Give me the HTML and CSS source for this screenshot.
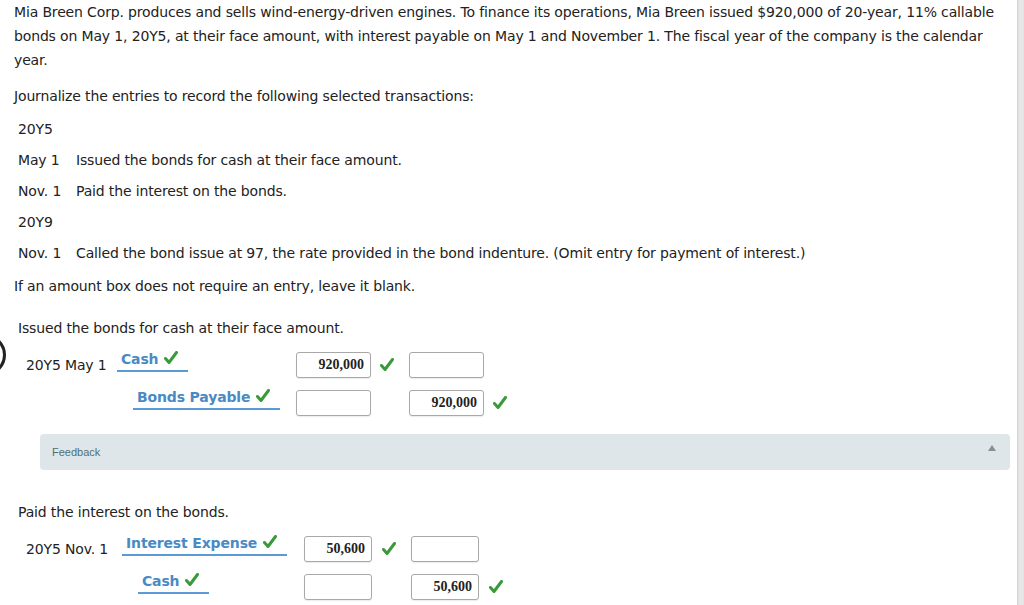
FILE: index.html
```html
<!DOCTYPE html>
<html>
<head>
<meta charset="utf-8">
<link rel="stylesheet" href="styles.css">
</head>
<body>
<div class="page">
  <p class="intro">Mia Breen Corp. produces and sells wind-energy-driven engines. To finance its operations, Mia Breen issued $920,000 of 20-year, 11% callable bonds on May 1, 20Y5, at their face amount, with interest payable on May 1 and November 1. The fiscal year of the company is the calendar year.</p>
  <p class="instr">Journalize the entries to record the following selected transactions:</p>
  <div class="trans">
    <div class="yr">20Y5</div>
    <div class="tx"><span class="td">May 1</span><span>Issued the bonds for cash at their face amount.</span></div>
    <div class="tx"><span class="td">Nov. 1</span><span>Paid the interest on the bonds.</span></div>
    <div class="yr">20Y9</div>
    <div class="tx"><span class="td">Nov. 1</span><span>Called the bond issue at 97, the rate provided in the bond indenture. (Omit entry for payment of interest.)</span></div>
  </div>
  <p class="note">If an amount box does not require an entry, leave it blank.</p>

  <div class="section s1">
    <div class="circle"></div>
    <p class="stitle">Issued the bonds for cash at their face amount.</p>
    <div class="journal j1">
      <div class="row">
        <div class="date">20Y5 May 1</div>
        <div class="acct"><span class="lbl">Cash<svg class="chk" viewBox="0 0 14 14"><path d="M1.5 7.5 L5 11.5 L12.5 1.5"/></svg></span></div>
        <div class="amt"><input class="box" type="text" value="920,000" readonly><svg class="chk" viewBox="0 0 14 14"><path d="M1.5 7.5 L5 11.5 L12.5 1.5"/></svg></div>
        <div class="amt"><input class="box" type="text" value="" readonly></div>
      </div>
      <div class="row">
        <div class="date"></div>
        <div class="acct ind"><span class="lbl">Bonds Payable<svg class="chk" viewBox="0 0 14 14"><path d="M1.5 7.5 L5 11.5 L12.5 1.5"/></svg></span></div>
        <div class="amt"><input class="box" type="text" value="" readonly></div>
        <div class="amt"><input class="box" type="text" value="920,000" readonly><svg class="chk" viewBox="0 0 14 14"><path d="M1.5 7.5 L5 11.5 L12.5 1.5"/></svg></div>
      </div>
    </div>
    <div class="feedback"><span>Feedback</span><span class="tri"></span></div>
  </div>

  <div class="section s2">
    <p class="stitle">Paid the interest on the bonds.</p>
    <div class="journal j2">
      <div class="row">
        <div class="date">20Y5 Nov. 1</div>
        <div class="acct"><span class="lbl">Interest Expense<svg class="chk" viewBox="0 0 14 14"><path d="M1.5 7.5 L5 11.5 L12.5 1.5"/></svg></span></div>
        <div class="amt"><input class="box" type="text" value="50,600" readonly><svg class="chk" viewBox="0 0 14 14"><path d="M1.5 7.5 L5 11.5 L12.5 1.5"/></svg></div>
        <div class="amt"><input class="box" type="text" value="" readonly></div>
      </div>
      <div class="row">
        <div class="date"></div>
        <div class="acct ind"><span class="lbl">Cash<svg class="chk" viewBox="0 0 14 14"><path d="M1.5 7.5 L5 11.5 L12.5 1.5"/></svg></span></div>
        <div class="amt"><input class="box" type="text" value="" readonly></div>
        <div class="amt"><input class="box" type="text" value="50,600" readonly><svg class="chk" viewBox="0 0 14 14"><path d="M1.5 7.5 L5 11.5 L12.5 1.5"/></svg></div>
      </div>
    </div>
  </div>
</div>
<div class="scrollbar"></div>
</body>
</html>
```

FILE: styles.css
```css
html, body {
  margin: 0;
  padding: 0;
  background: #fff;
  overflow: hidden;
}
body {
  font-family: "DejaVu Sans", Verdana, sans-serif;
  font-size: 14px;
  letter-spacing: -0.15px;
  color: #222;
}
.page {
  position: relative;
  width: 996px;
  padding-left: 14px;
}
p { margin: 0; }
.intro {
  line-height: 24px;
  margin-top: 0;
}
.instr {
  line-height: 24px;
  margin-top: 12px;
}
.trans {
  padding-left: 4px;
  margin-top: 9px;
}
.yr, .tx {
  line-height: 24px;
  margin-bottom: 7px;
}
.tx { display: flex; }
.td { width: 58px; flex: none; }
.note {
  line-height: 24px;
  margin-top: 9px;
}
.section { position: relative; }
.stitle {
  line-height: 24px;
  padding-left: 4px;
}
.s1 { margin-top: 18px; }
.circle {
  position: absolute;
  left: -50px;
  top: 18px;
  width: 36px;
  height: 36px;
  border: 3px solid #222;
  border-radius: 50%;
}
.journal {
  margin-top: 6px;
  padding-left: 12px;
}
.row {
  display: grid;
  height: 38px;
  align-items: center;
}
.j1 .row { grid-template-columns: 91px 179px 113px 120px; }
.j2 .row { grid-template-columns: 96px 182px 107px 120px; }
.date { white-space: nowrap; }
.acct { display: flex; }
.acct.ind { padding-left: 16px; }
.lbl {
  display: inline-flex;
  align-items: center;
  gap: 6px;
  font-weight: bold;
  color: #4a8ac4;
  line-height: 20px;
  padding: 0 10px 1px 4px;
  border-bottom: 2px solid #5b9bd5;
  margin-bottom: 10px;
  white-space: nowrap;
}
.lbl .chk { margin-top: -1px; }
.amt {
  display: flex;
  align-items: center;
  gap: 9px;
}
.j2 .amt { gap: 10px; }
.box {
  box-sizing: border-box;
  width: 75px;
  height: 26px;
  border: 1px solid #a8a8a8;
  border-radius: 3px;
  background: #fff;
  box-shadow: 0 1px 1px rgba(0,0,0,0.08);
  font-family: "Liberation Serif", "Times New Roman", serif;
  font-weight: bold;
  font-size: 14px;
  letter-spacing: 0;
  color: #222;
  text-align: right;
  padding: 0 6px 0 2px;
  margin: 0;
  outline: none;
}
.j2 .box { width: 68px; }
.chk {
  width: 14px;
  height: 14px;
  flex: none;
  fill: none;
  stroke: #3a9a3a;
  stroke-width: 3;
  stroke-linecap: round;
  stroke-linejoin: round;
}
.feedback {
  margin: 12px 0 0 26px;
  width: 970px;
  height: 36px;
  box-sizing: border-box;
  background: #dfe6e9;
  border-radius: 4px;
  display: flex;
  align-items: center;
  justify-content: space-between;
  padding: 0 14px 0 12px;
  font-family: "Liberation Sans", Arial, sans-serif;
  font-size: 11px;
  letter-spacing: 0;
  color: #4e6f75;
}
.tri {
  width: 0;
  height: 0;
  border-left: 4px solid transparent;
  border-right: 4px solid transparent;
  border-bottom: 6px solid #8a8f92;
  margin-top: -8px;
}
.s2 { margin-top: 30px; }
.scrollbar {
  position: fixed;
  top: 0;
  right: 0;
  width: 7px;
  height: 100%;
  background: linear-gradient(to right, #d2d2d2, #e9e9e9 40%, #e4e4e4);
}
```
